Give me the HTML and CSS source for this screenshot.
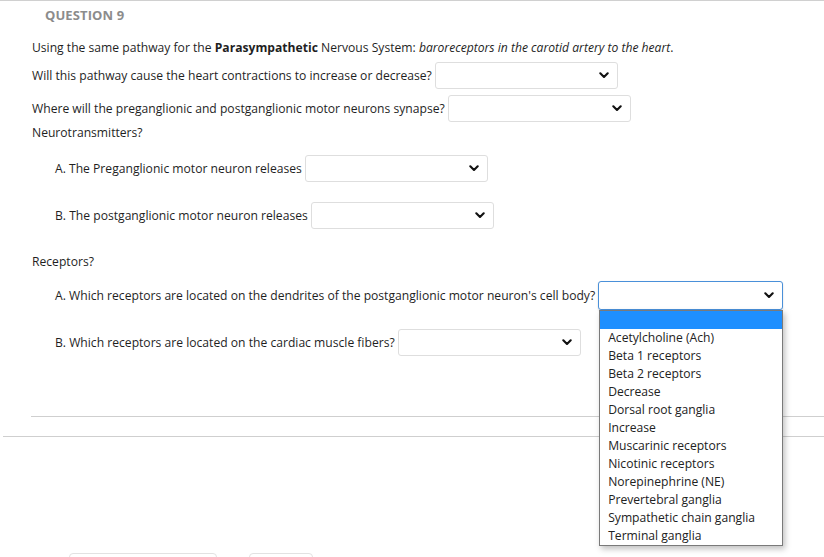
FILE: index.html
```html
<!DOCTYPE html>
<html>
<head>
<meta charset="utf-8">
<link rel="stylesheet" href="styles.css">
</head>
<body>
<div class="page">
  <div class="q-title">QUESTION 9</div>
  <div class="q-body">
    <p class="intro">Using the same pathway for the <b>Parasympathetic</b> Nervous System: <i>baroreceptors in the carotid artery to the heart</i>.</p>
    <div class="row r1"><span>Will this pathway cause the heart contractions to increase or decrease?</span><div class="sel"><svg class="chev" viewBox="0 0 10 7" width="10" height="7"><polyline points="1.3,1.3 5,5 8.7,1.3"/></svg></div></div>
    <div class="row r2"><span>Where will the preganglionic and postganglionic motor neurons synapse?</span><div class="sel"><svg class="chev" viewBox="0 0 10 7" width="10" height="7"><polyline points="1.3,1.3 5,5 8.7,1.3"/></svg></div></div>
    <p class="plain neuro">Neurotransmitters?</p>
    <div class="row sub ra"><span>A. The Preganglionic motor neuron releases</span><div class="sel"><svg class="chev" viewBox="0 0 10 7" width="10" height="7"><polyline points="1.3,1.3 5,5 8.7,1.3"/></svg></div></div>
    <div class="row sub rb"><span>B. The postganglionic motor neuron releases</span><div class="sel"><svg class="chev" viewBox="0 0 10 7" width="10" height="7"><polyline points="1.3,1.3 5,5 8.7,1.3"/></svg></div></div>
    <p class="plain recep">Receptors?</p>
    <div class="row sub rra"><span>A. Which receptors are located on the dendrites of the postganglionic motor neuron's cell body?</span>
      <div class="sel open"><svg class="chev" viewBox="0 0 10 7" width="10" height="7"><polyline points="1.3,1.3 5,5 8.7,1.3"/></svg>
        <ul class="list">
          <li class="hl">&nbsp;</li>
          <li>Acetylcholine (Ach)</li>
          <li>Beta 1 receptors</li>
          <li>Beta 2 receptors</li>
          <li>Decrease</li>
          <li>Dorsal root ganglia</li>
          <li>Increase</li>
          <li>Muscarinic receptors</li>
          <li>Nicotinic receptors</li>
          <li>Norepinephrine (NE)</li>
          <li>Prevertebral ganglia</li>
          <li>Sympathetic chain ganglia</li>
          <li>Terminal ganglia</li>
        </ul>
      </div>
    </div>
    <div class="row sub rrb"><span>B. Which receptors are located on the cardiac muscle fibers?</span><div class="sel"><svg class="chev" viewBox="0 0 10 7" width="10" height="7"><polyline points="1.3,1.3 5,5 8.7,1.3"/></svg></div></div>
  </div>
  <div class="rule rule1"></div>
  <div class="rule rule2"></div>
  <div class="bottom">
    <div class="stub stub1"></div>
    <div class="stub stub2"></div>
  </div>
</div>
</body>
</html>
```
FILE: styles.css
```css
html, body {
  margin: 0;
  padding: 0;
  overflow: hidden;
  background: #fff;
}
body {
  font-family: "Open Sans", "DejaVu Sans", sans-serif;
  font-size: 12.13px;
  color: #1f1f1f;
}
.page {
  width: 824px;
  height: 557px;
  border-top: 1px solid #d0d0d0;
  box-sizing: border-box;
}
.q-title {
  margin: 5px 0 0 45px;
  font-size: 13px;
  font-weight: 700;
  color: #8c8c8c;
  line-height: 18px;
  letter-spacing: 0.1px;
}
.q-body {
  padding-left: 32px;
}
p { margin: 0; }
.intro {
  margin-top: 15px;
  line-height: 18px;
}
.intro b { font-weight: 700; }
.row {
  display: flex;
  align-items: center;
  gap: 3px;
  height: 27px;
}
.row span { white-space: nowrap; line-height: 18px; }
.r1 { margin-top: 5px; }
.r2 { margin-top: 6px; }
.plain { line-height: 18px; }
.neuro { margin-top: 2px; }
.sub { padding-left: 23px; }
.ra { margin-top: 13px; }
.rb { margin-top: 20px; }
.recep { margin-top: 24px; }
.rra { margin-top: 10px; height: 29px; }
.rrb { margin-top: 19px; }
.sel {
  position: relative;
  width: 183px;
  height: 27px;
  box-sizing: border-box;
  border: 1px solid #dedede;
  border-radius: 3px;
  background: #fff;
  display: flex;
  align-items: center;
  justify-content: flex-end;
  padding-right: 8px;
}
.sel.open {
  height: 29px;
  width: 185px;
  border-color: #4a90d9;
  box-shadow: 0 1px 2px rgba(0,0,0,0.15);
}
.chev polyline {
  fill: none;
  stroke: #111;
  stroke-width: 2.1;
  stroke-linecap: round;
  stroke-linejoin: round;
}
.list {
  position: absolute;
  left: 0;
  top: 28px;
  width: 184px;
  margin: 0;
  padding: 0;
  list-style: none;
  background: #fff;
  border: 1px solid #7a7a7a;
  box-sizing: border-box;
  box-shadow: 2px 3px 6px rgba(0,0,0,0.25);
  z-index: 5;
}
.list li {
  height: 18px;
  line-height: 18px;
  padding-left: 8px;
  color: #222;
  white-space: nowrap;
}
.list li.hl { background: #1e8fff; }
.rule {
  height: 0;
  border-top: 1px solid #cfcfcf;
}
.rule1 { margin: 60px 0 0 31px; }
.rule2 { margin: 19px 0 0 3px; }
.bottom {
  display: flex;
  margin-top: 116px;
  padding-left: 69px;
  gap: 32px;
}
.stub {
  height: 20px;
  border: 1px solid #e2e2e2;
  border-radius: 4px;
}
.stub1 { width: 146px; }
.stub2 { width: 62px; }
```
